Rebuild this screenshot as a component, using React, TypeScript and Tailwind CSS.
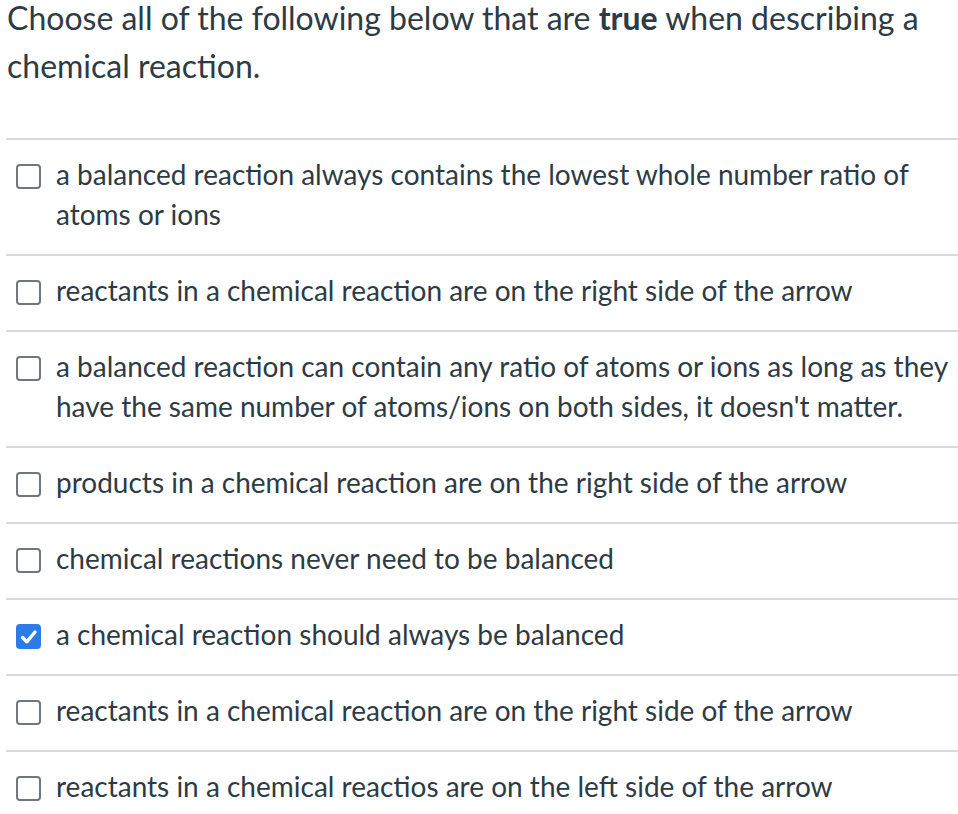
import React from "react";

const options: { text: string; checked?: boolean }[] = [
  { text: "a balanced reaction always contains the lowest whole number ratio of atoms or ions" },
  { text: "reactants in a chemical reaction are on the right side of the arrow" },
  { text: "a balanced reaction can contain any ratio of atoms or ions as long as they have the same number of atoms/ions on both sides, it doesn't matter." },
  { text: "products in a chemical reaction are on the right side of the arrow" },
  { text: "chemical reactions never need to be balanced" },
  { text: "a chemical reaction should always be balanced", checked: true },
  { text: "reactants in a chemical reaction are on the right side of the arrow" },
  { text: "reactants in a chemical reactios are on the left side of the arrow" },
];

function Box({ checked }: { checked?: boolean }) {
  if (checked) {
    return (
      <div className="mt-[10px] flex h-[25px] w-[25px] shrink-0 items-center justify-center rounded-[4px] bg-[#2b7be8]">
        <svg width="18" height="16" viewBox="0 0 18 16" fill="none">
          <path d="M2.5 8.5 L6.8 12.8 L15 3" stroke="white" strokeWidth="3.4" strokeLinecap="round" strokeLinejoin="round" />
        </svg>
      </div>
    );
  }
  return <div className="mt-[10px] h-[25px] w-[25px] shrink-0 rounded-[4px] border-2 border-[#6f767c] bg-white" />;
}

export default function App() {
  return (
    <div className="min-h-[814px] w-[958px] bg-white pl-[6px] pt-[1px] text-[#2d3b45]" style={{ fontFamily: "Lato, 'Noto Sans', sans-serif" }}>
      <div className="-mt-[7px] pl-[1px] text-[32px] leading-[48px]">
        Choose all of the following below that are <b className="font-bold">true</b> when describing a chemical reaction.
      </div>
      <div className="mt-[48px]">
        {options.map((o, i) => (
          <div key={i} className="flex gap-[15px] border-t-2 border-[#dadada] pb-[20px] pl-[10px] pt-[14px]">
            <Box checked={o.checked} />
            <div className="text-[28px] leading-[40px]">{o.text}</div>
          </div>
        ))}
      </div>
    </div>
  );
}
